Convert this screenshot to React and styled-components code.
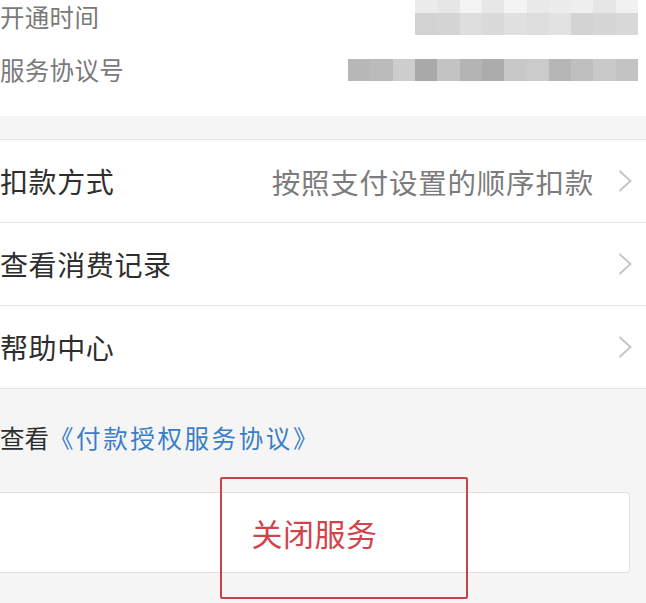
import styled, { createGlobalStyle } from "styled-components";

const GlobalStyle = createGlobalStyle`
  html, body {
    margin: 0;
    padding: 0;
    background: #f5f5f5;
  }
  body {
    font-family: "Noto Sans CJK SC", "Noto Sans", sans-serif;
    overflow: hidden;
  }
`;

const Page = styled.div`
  width: 646px;
  height: 603px;
  overflow: hidden;
  background: #f5f5f5;
`;

const InfoSection = styled.section`
  background: #fff;
  margin-top: -10px;
  padding-bottom: 20px;
`;

const InfoRow = styled.div`
  height: 53px;
  display: flex;
  align-items: ${(p) => (p.$top ? "flex-start" : "center")};
  justify-content: space-between;
`;

const InfoLabel = styled.span`
  font-size: 24.5px;
  line-height: 53px;
  color: #7a7a7a;
  letter-spacing: 0.3px;
`;

const Blur = styled.div`
  display: grid;
  grid-template-columns: repeat(${(p) => p.$cols}, 22.3px);
  margin-right: 8px;
`;

const Cell = styled.div`
  height: ${(p) => p.$h}px;
`;

const List = styled.section`
  margin-top: 23px;
  background: #fff;
  border-top: 1px solid #e6e6e6;
`;

const Row = styled.div`
  height: 82px;
  display: flex;
  align-items: center;
  justify-content: space-between;
  border-bottom: 1px solid #e6e6e6;
  padding-right: 14px;
`;

const RowLabel = styled.span`
  font-size: 28px;
  color: #2e2e2e;
  letter-spacing: 0.6px;
`;

const RowEnd = styled.div`
  display: flex;
  align-items: center;
  gap: 24px;
`;

const RowValue = styled.span`
  font-size: 28.5px;
  color: #7c7c7c;
  letter-spacing: 0.8px;
`;

const Agreement = styled.p`
  margin: 0;
  padding-top: 34px;
  font-size: 24.5px;
  line-height: 30px;
  color: #2e2e2e;
`;

const Link = styled.span`
  color: #3a7ec6;
  letter-spacing: 2.6px;
`;

const ButtonWrap = styled.div`
  position: relative;
  margin-top: 39px;
  width: 630px;
`;

const CloseButton = styled.button`
  display: block;
  width: 630px;
  height: 81px;
  padding: 0;
  background: #fff;
  border: 1px solid #e0e0e0;
  border-left: none;
  border-radius: 0 4px 4px 0;
  font-family: inherit;
  font-size: 31px;
  color: #d2434b;
  text-align: center;
  letter-spacing: 0.5px;
`;

const Highlight = styled.div`
  position: absolute;
  left: 220px;
  top: -15px;
  width: 244px;
  height: 118px;
  border: 2px solid #c9434a;
  border-radius: 2px;
  pointer-events: none;
`;

const Chevron = () => (
  <svg width="14" height="22" viewBox="0 0 14 22">
    <polyline points="1.5,1 12.5,11 1.5,21" fill="none" stroke="#c4c4c4" strokeWidth="1.8" />
  </svg>
);

const topBlur = [
  ["#ececec", "#e6e6e6", "#f3f3f3", "#e7e7e7", "#f4f4f4", "#e9e9e9", "#ececec", "#eeeeee", "#e6e6e6", "#f1f1f1"],
  ["#d2d2d2", "#d4d4d4", "#dedede", "#dadada", "#e1e1e1", "#dddddd", "#e2e2e2", "#d3d3d3", "#d6d6d6", "#d8d8d8"],
];

const idBlur = ["#b7b7b7", "#bbbbbb", "#cdcdcd", "#a9a9a9", "#c3c3c3", "#b4b4b4", "#acacac", "#c7c7c7", "#cbcbcb", "#b6b6b6", "#bfbfbf", "#c9c9c9", "#c4c4c4"];

const rows = [
  { label: "扣款方式", value: "按照支付设置的顺序扣款" },
  { label: "查看消费记录" },
  { label: "帮助中心" },
];

export default function App() {
  return (
    <Page>
      <GlobalStyle />
      <InfoSection>
        <InfoRow $top>
          <InfoLabel>开通时间</InfoLabel>
          <Blur $cols={10}>
            {topBlur.map((line, i) =>
              line.map((c, j) => <Cell key={`${i}-${j}`} $h={i === 0 ? 23 : 22} style={{ background: c }} />)
            )}
          </Blur>
        </InfoRow>
        <InfoRow>
          <InfoLabel>服务协议号</InfoLabel>
          <Blur $cols={13}>
            {idBlur.map((c, j) => (
              <Cell key={j} $h={22} style={{ background: c }} />
            ))}
          </Blur>
        </InfoRow>
      </InfoSection>

      <List>
        {rows.map((r) => (
          <Row key={r.label}>
            <RowLabel>{r.label}</RowLabel>
            <RowEnd>
              {r.value && <RowValue>{r.value}</RowValue>}
              <Chevron />
            </RowEnd>
          </Row>
        ))}
      </List>

      <Agreement>
        查看<Link>《付款授权服务协议》</Link>
      </Agreement>

      <ButtonWrap>
        <CloseButton>关闭服务</CloseButton>
        <Highlight />
      </ButtonWrap>
    </Page>
  );
}
